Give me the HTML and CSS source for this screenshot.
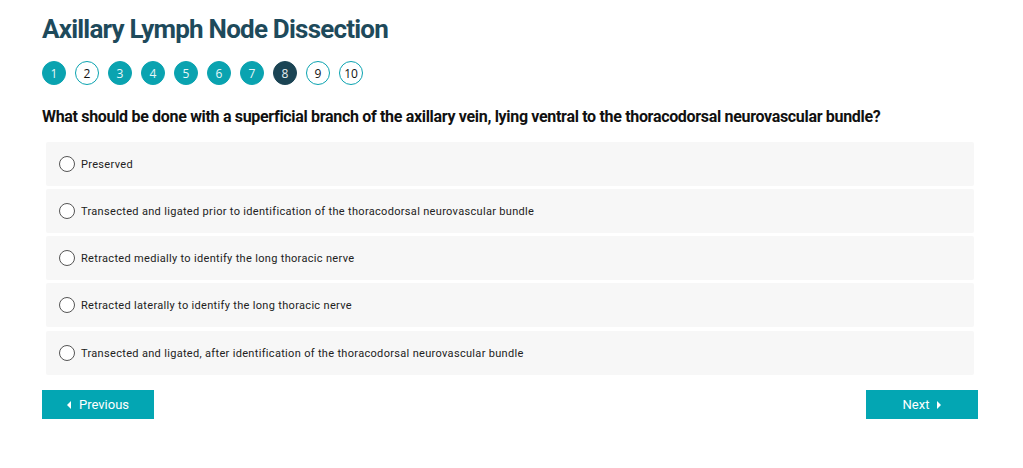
FILE: index.html
```html
<!DOCTYPE html>
<html>
<head>
<meta charset="utf-8">
<link rel="stylesheet" href="styles.css">
</head>
<body>
<div class="page">
  <h1 class="title">Axillary Lymph Node Dissection</h1>
  <div class="steps">
    <span class="step done">1</span>
    <span class="step">2</span>
    <span class="step done">3</span>
    <span class="step done">4</span>
    <span class="step done">5</span>
    <span class="step done">6</span>
    <span class="step done">7</span>
    <span class="step current">8</span>
    <span class="step">9</span>
    <span class="step">10</span>
  </div>
  <p class="question">What should be done with a superficial branch of the axillary vein, lying ventral to the thoracodorsal neurovascular bundle?</p>
  <div class="options">
    <label class="option"><span class="radio"></span><span class="label">Preserved</span></label>
    <label class="option"><span class="radio"></span><span class="label">Transected and ligated prior to identification of the thoracodorsal neurovascular bundle</span></label>
    <label class="option"><span class="radio"></span><span class="label">Retracted medially to identify the long thoracic nerve</span></label>
    <label class="option"><span class="radio"></span><span class="label">Retracted laterally to identify the long thoracic nerve</span></label>
    <label class="option"><span class="radio"></span><span class="label">Transected and ligated, after identification of the thoracodorsal neurovascular bundle</span></label>
  </div>
  <div class="nav">
    <button class="btn"><span class="tri left"></span>Previous</button>
    <button class="btn">Next<span class="tri right"></span></button>
  </div>
</div>
</body>
</html>
```
FILE: styles.css
```css
html, body { margin: 0; padding: 0; background: #fff; }
body { font-family: Roboto, "Liberation Sans", sans-serif; color: #111; }
.page { width: 936px; padding: 12px 0 0 42px; }
.title {
  margin: 0;
  font-family: Roboto, sans-serif;
  font-weight: 700;
  font-size: 26px;
  line-height: 34px;
  color: #1e4a5b;
  letter-spacing: -0.78px;
}
.steps { display: flex; gap: 9px; margin-top: 15px; }
.step {
  width: 24px; height: 24px; box-sizing: border-box;
  border-radius: 50%;
  border: 1px solid #0aa3b0;
  display: flex; align-items: center; justify-content: center;
  font-size: 12px; color: #111;
  font-family: "Open Sans", sans-serif;
}
.step.done { background: #0aa3b0; color: #e8f7f8; }
.step.current { background: #1b4454; border-color: #1b4454; color: #e6eef0; }
.question {
  margin: 21px 0 0;
  font-size: 16px; font-weight: 700; line-height: 22px; color: #111;
  letter-spacing: -0.32px;
}
.options { display: flex; flex-direction: column; gap: 3px; margin: 14px 4px 0; }
.option {
  display: flex; align-items: center; gap: 6px;
  height: 44px; padding: 0 13px;
  background: #f7f7f7; border-radius: 2px;
}
.option:last-child { margin-top: 1px; }
.radio {
  width: 16px; height: 16px; box-sizing: border-box;
  border: 1px solid #555; border-radius: 50%; background: #fff;
}
.label { font-size: 11px; letter-spacing: 0.32px; color: #222; }
.nav { display: flex; justify-content: space-between; margin-top: 15px; }
.btn {
  width: 112px; height: 29px; border: 0; border-radius: 0;
  background: #03a6b3; color: #fff;
  font-family: Roboto, sans-serif; font-size: 13px;
  display: flex; align-items: center; justify-content: center; gap: 8px;
  padding: 0;
}
.tri { width: 0; height: 0; border-top: 4px solid transparent; border-bottom: 4px solid transparent; }
.tri.left { border-right: 4px solid #fff; }
.tri.right { border-left: 4px solid #fff; }
```
